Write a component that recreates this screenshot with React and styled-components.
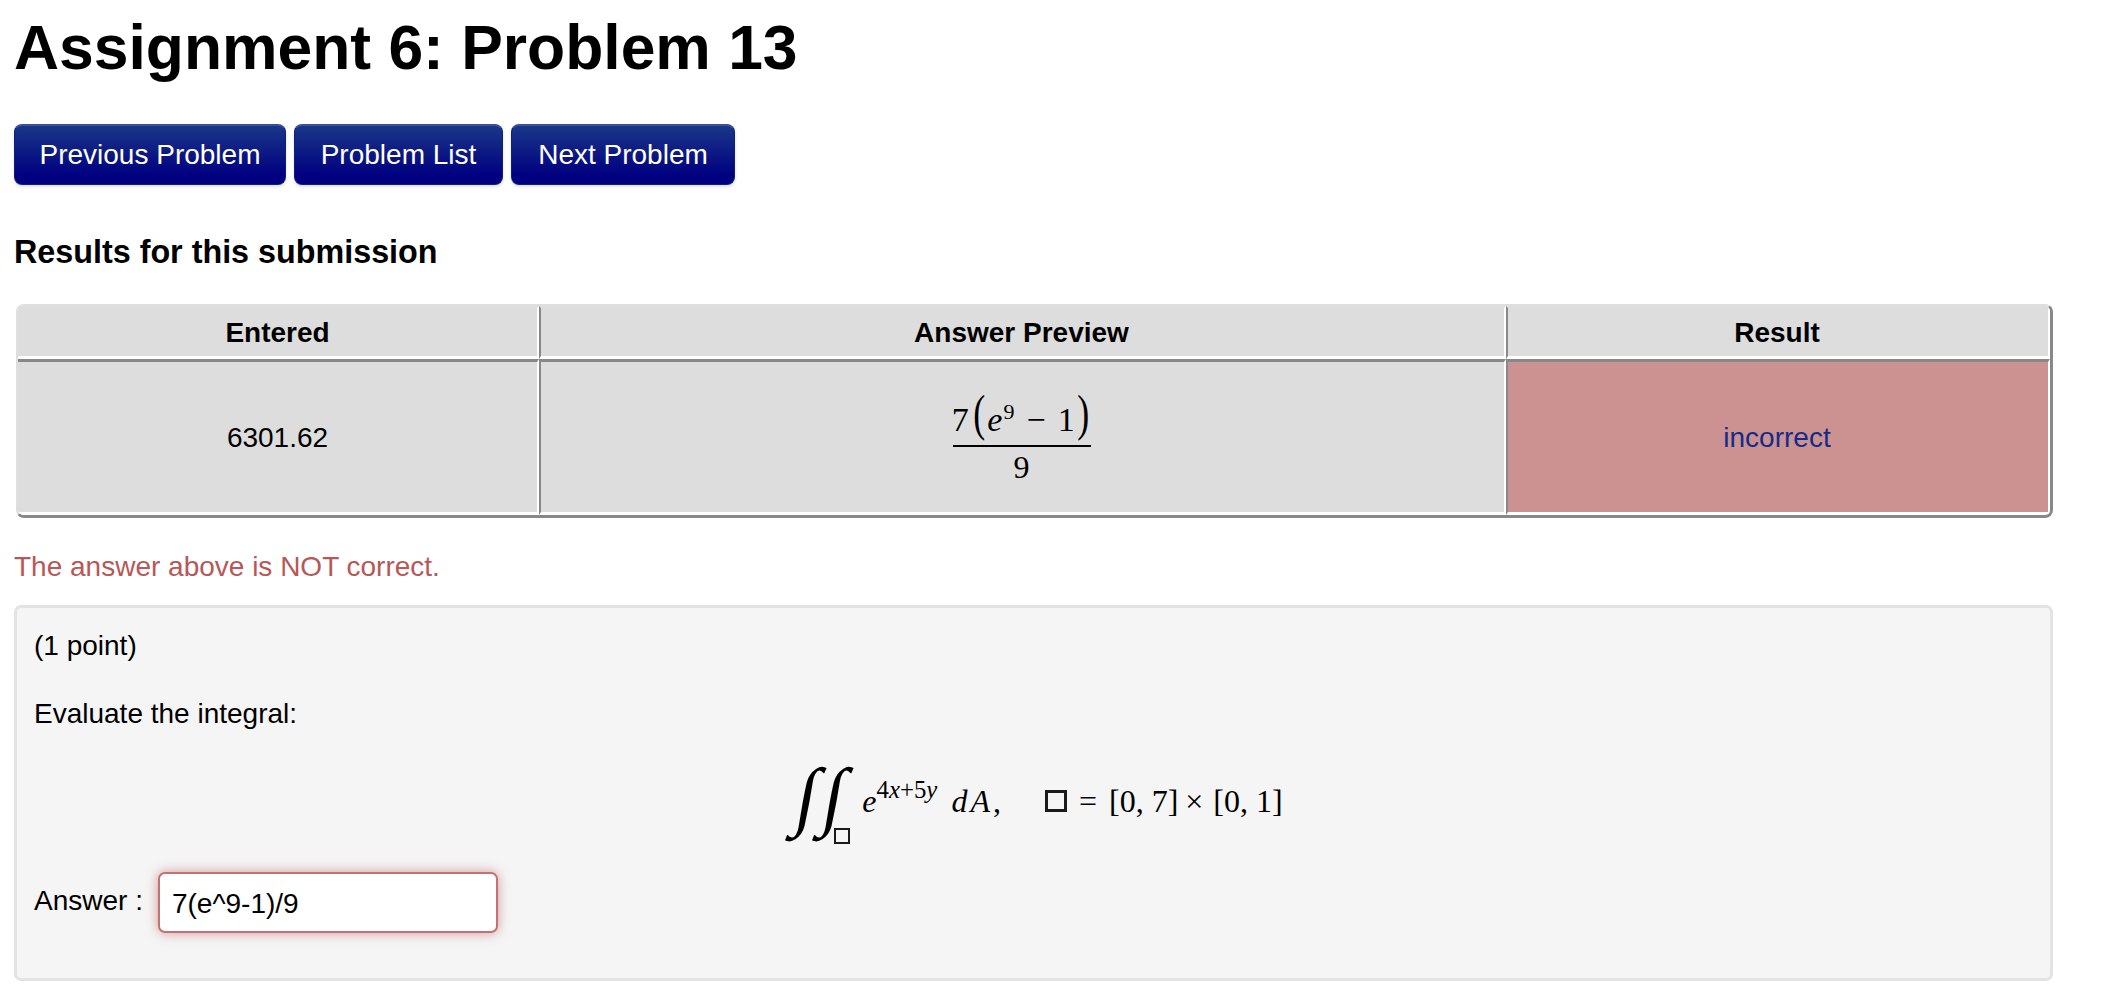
import React from 'react'
import styled, { createGlobalStyle } from 'styled-components'

const GlobalStyle = createGlobalStyle`
  html, body {
    margin: 0;
    background: #fff;
    color: #000;
    font-family: 'Liberation Sans', Arial, sans-serif;
    font-size: 28px;
  }
`

const Page = styled.div`
  padding: 0 60px 20px 14px;
`

const Title = styled.h1`
  margin: 0;
  height: 98px;
  padding-top: 12px;
  box-sizing: border-box;
  font-size: 62.4px;
  line-height: 72px;
  font-weight: 700;
`

const Nav = styled.div`
  display: flex;
  gap: 8px;
  margin-top: 26px;
`

const NavButton = styled.a`
  display: block;
  box-sizing: border-box;
  width: ${(props) => props.$width}px;
  height: 61px;
  border-radius: 8px;
  border: 1px solid #0c1f80;
  border-top: 2px solid #3b5197;
  background: linear-gradient(#1a3788, #000080 85%);
  box-shadow: 0 2px 3px rgba(0, 0, 0, 0.12);
  color: #fff;
  font-size: 28px;
  line-height: 57px;
  text-align: center;
`

const Heading = styled.h2`
  margin: 48px 0 0;
  font-size: 32.3px;
  line-height: 38px;
  font-weight: 700;
`

const ResultsTable = styled.table`
  width: 2037px;
  margin: 33px 0 0 2px;
  box-sizing: border-box;
  border-collapse: separate;
  border-spacing: 0;
  table-layout: fixed;
  border-style: solid;
  border-width: 2px 3px 3px 2px;
  border-color: #dedede #888 #888 #dedede;
  border-radius: 8px;
  overflow: hidden;
  background: #fff;
`

const Cell = styled.td`
  box-sizing: border-box;
  padding: 2px ${(props) => (props.$first ? 0 : '2px')} 0 0;
  text-align: center;
  vertical-align: middle;
  background: ${(props) => (props.$bad ? '#cb9291' : '#ddd')};
  color: ${(props) => (props.$bad ? '#122c88' : '#000')};
  font-weight: ${(props) => (props.$head ? 700 : 400)};
  height: ${(props) => (props.$head ? '53px' : '156px')};
  border-style: solid;
  border-color: ${(props) => (props.$head ? 'transparent' : '#888')} #fff #fff ${(props) => (props.$first ? 'transparent' : '#888')};
  border-width: ${(props) => (props.$head ? '2px 2px 3px 0' : '3px 2px 3px 0')};
  border-left-width: ${(props) => (props.$first ? 0 : '2px')};
`

const Fraction = styled.span`
  display: inline-flex;
  flex-direction: column;
  align-items: stretch;
  width: 138px;
  font-family: 'Liberation Serif', 'Times New Roman', serif;
  font-size: 34px;
`

const Numerator = styled.span`
  display: flex;
  justify-content: center;
  align-items: baseline;
  height: 55px;
  line-height: 60px;
  border-bottom: 2px solid #000;
  white-space: nowrap;
`

const Denominator = styled.span`
  display: block;
  text-align: center;
  font-size: 32px;
  line-height: 40px;
`

const Paren = styled.span`
  font-size: 50px;
  line-height: 40px;
  font-weight: 100;
  margin: ${(props) => props.$margin || '0'};
  transform: scaleX(0.72) translateY(-1px);
`

const Ital = styled.i`
  font-style: italic;
`

const Sup = styled.span`
  font-size: ${(props) => props.$size || '22px'};
  position: relative;
  top: ${(props) => props.$top || '-12px'};
  margin-left: ${(props) => props.$left || '1px'};
`

const Op = styled.span`
  margin: ${(props) => props.$margin || '0 10px'};
`

const ErrorLine = styled.p`
  margin: 31px 0 0;
  color: #b85757;
  font-size: 28px;
  line-height: 36px;
`

const ProblemBox = styled.div`
  box-sizing: border-box;
  height: 376px;
  margin: 20px 0 0;
  padding: 22px 17px 0;
  background: #f5f5f5;
  border: 3px solid #e3e3e3;
  border-radius: 7px;
`

const Para = styled.p`
  margin: 0 0 36px;
  line-height: 32px;
`

const MathRow = styled.div`
  display: flex;
  justify-content: center;
  align-items: baseline;
  height: 92px;
  margin-top: -18px;
  padding-left: 13px;
  font-family: 'Liberation Serif', 'Times New Roman', serif;
  font-size: 32px;
  white-space: nowrap;
`

const Integral = styled.span`
  font-size: 76px;
  line-height: 76px;
  width: 27px;
  font-weight: 400;
  transform: translateY(9px) skewX(-10deg);
`

const BoxGlyph = styled.span`
  display: inline-block;
  box-sizing: border-box;
  flex: none;
  width: ${(props) => props.$size}px;
  height: ${(props) => props.$size}px;
  margin-left: ${(props) => props.$left || '0px'};
  border: ${(props) => props.$stroke}px solid #1a1a1a;
  position: relative;
  top: ${(props) => props.$top || '0px'};
`

const Spaced = styled.i`
  font-style: italic;
  margin-left: ${(props) => props.$left};
  letter-spacing: ${(props) => props.$track || 'normal'};
`

const AnswerRow = styled.div`
  display: flex;
  align-items: center;
  gap: 15px;
  margin-top: 32px;
`

const AnswerLabel = styled.label`
  position: relative;
  top: -2px;
`

const AnswerInput = styled.input`
  box-sizing: border-box;
  width: 340px;
  height: 61px;
  padding: 3px 12px 0;
  border: 2px solid #c27272;
  border-radius: 7px;
  background: #fff;
  box-shadow: 0 0 12px rgba(185, 74, 72, 0.55);
  color: #000;
  font-family: 'Liberation Sans', Arial, sans-serif;
  font-size: 28px;
  outline: none;
`

const App = () => {
  return (
    <Page>
      <GlobalStyle />
      <Title>Assignment 6: Problem 13</Title>
      <Nav>
        <NavButton $width={272}>Previous Problem</NavButton>
        <NavButton $width={209}>Problem List</NavButton>
        <NavButton $width={224}>Next Problem</NavButton>
      </Nav>
      <Heading>Results for this submission</Heading>
      <ResultsTable>
        <colgroup>
          <col style={{ width: 521 }} />
          <col style={{ width: 967 }} />
          <col />
        </colgroup>
        <tbody>
          <tr>
            <Cell $head $first>Entered</Cell>
            <Cell $head>Answer Preview</Cell>
            <Cell $head>Result</Cell>
          </tr>
          <tr>
            <Cell $first>6301.62</Cell>
            <Cell>
              <Fraction>
                <Numerator>
                  7
                  <Paren $margin="0 0 0 2px">(</Paren>
                  <Ital>e</Ital>
                  <Sup>9</Sup>
                  <Op $margin="0 12px">−</Op>
                  1
                  <Paren>)</Paren>
                </Numerator>
                <Denominator>9</Denominator>
              </Fraction>
            </Cell>
            <Cell $bad>incorrect</Cell>
          </tr>
        </tbody>
      </ResultsTable>
      <ErrorLine>The answer above is NOT correct.</ErrorLine>
      <ProblemBox>
        <Para>(1 point)</Para>
        <Para>Evaluate the integral:</Para>
        <MathRow>
          <Integral>∫</Integral>
          <Integral>∫</Integral>
          <BoxGlyph $size={16} $stroke={2} $top="32px" $left="-17px" />
          <Spaced $left="12px">e</Spaced>
          <Sup $size="24.8px" $top="-14px" $left="0px">4<Ital>x</Ital>+5<Ital>y</Ital></Sup>
          <Spaced $left="14px" $track="3px">dA</Spaced>
          <span>,</span>
          <BoxGlyph $size={22} $stroke={3} $left="44px" />
          <Op $margin="0 12px">=</Op>
          <span>[0, 7]</span>
          <Op $margin="0 10px 0 7px">×</Op>
          <span>[0, 1]</span>
        </MathRow>
        <AnswerRow>
          <AnswerLabel>Answer :</AnswerLabel>
          <AnswerInput defaultValue="7(e^9-1)/9" />
        </AnswerRow>
      </ProblemBox>
    </Page>
  )
}

export default App
